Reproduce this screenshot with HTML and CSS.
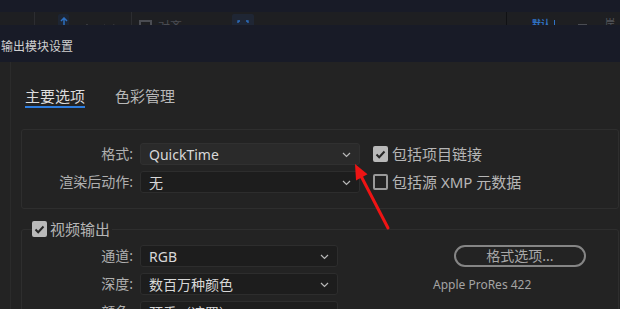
FILE: index.html
```html
<!DOCTYPE html>
<html lang="zh">
<head>
<meta charset="utf-8">
<link rel="stylesheet" href="styles.css">
</head>
<body>
<div class="page">
  <div class="top"></div>
  <div class="toolbar">
    <span class="tb-sep tb-sep1"></span>
    <span class="tb-btn tb-btn1"><svg width="10" height="10" viewBox="0 0 10 10"><path d="M5 1 L5 9 M2 4 L5 1 L8 4" stroke="#2d6fc0" stroke-width="1.5" fill="none"/></svg></span>
    <span class="tb-icon"><svg width="10" height="10" viewBox="0 0 10 10"><path d="M5 1 L5 9 M3 3 L5 1 L7 3 M2 9 H8" stroke="#55575c" stroke-width="1.3" fill="none"/></svg></span>
    <span class="tb-icon tb-icon2"><svg width="14" height="10" viewBox="0 0 14 10"><path d="M1 1 L6 5 L13 2 M10 1 L13 2 L12 5" stroke="#55575c" stroke-width="1.3" fill="none"/></svg></span>
    <span class="tb-sep tb-sep2"></span>
    <span class="tb-box"></span>
    <span class="tb-text">对齐</span>
    <span class="tb-icon tb-icon3"><svg width="6" height="6" viewBox="0 0 6 6"><path d="M0 6 L6 0 L6 6 Z" fill="#55575c"/></svg></span>
    <span class="tb-btn tb-btn2"><svg width="12" height="8" viewBox="0 0 12 8"><path d="M1 3 V1 H3 M9 1 H11 V3 M11 5 V7 H9 M3 7 H1 V5" stroke="#2d6fc0" stroke-width="1.3" fill="none"/></svg></span>
    <span class="tb-sep tb-sep3"></span>
    <span class="tb-blue">默认</span>
    <span class="tb-bar"></span>
    <span class="tb-dash"></span>
    <span class="tb-end">岸</span>
  </div>
  <div class="titlebar">输出模块设置</div>
  <div class="body">
    <div class="main">
      <div class="tabs">
        <div class="tab active">主要选项</div>
        <div class="tab">色彩管理</div>
      </div>
      <div class="panel">
        <div class="label">格式:</div>
        <div class="select select-hover"><span>QuickTime</span><svg class="chev" width="9" height="6" viewBox="0 0 9 6"><path d="M1 1 L4.5 4.5 L8 1" stroke="#b8b8b8" stroke-width="1.2" fill="none"/></svg></div>
        <label class="check"><span class="box checked"><svg width="11" height="9" viewBox="0 0 11 9"><path d="M1.5 4.5 L4.2 7.2 L9.5 1.5" stroke="#262626" stroke-width="2" fill="none"/></svg></span><span class="ctext">包括项目链接</span></label>
        <div class="label">渲染后动作:</div>
        <div class="select"><span>无</span><svg class="chev" width="9" height="6" viewBox="0 0 9 6"><path d="M1 1 L4.5 4.5 L8 1" stroke="#b8b8b8" stroke-width="1.2" fill="none"/></svg></div>
        <label class="check"><span class="box"></span><span class="ctext">包括源 XMP 元数据</span></label>
      </div>
      <fieldset class="group">
        <legend class="legend"><span class="box checked"><svg width="11" height="9" viewBox="0 0 11 9"><path d="M1.5 4.5 L4.2 7.2 L9.5 1.5" stroke="#262626" stroke-width="2" fill="none"/></svg></span><span class="ctext">视频输出</span></legend>
        <div class="grid">
          <div class="label">通道:</div>
          <div class="select"><span>RGB</span><svg class="chev" width="9" height="6" viewBox="0 0 9 6"><path d="M1 1 L4.5 4.5 L8 1" stroke="#b8b8b8" stroke-width="1.2" fill="none"/></svg></div>
          <div class="side"><button class="pill">格式选项...</button></div>
          <div class="label">深度:</div>
          <div class="select"><span>数百万种颜色</span><svg class="chev" width="9" height="6" viewBox="0 0 9 6"><path d="M1 1 L4.5 4.5 L8 1" stroke="#b8b8b8" stroke-width="1.2" fill="none"/></svg></div>
          <div class="side"><span class="codec">Apple ProRes 422</span></div>
          <div class="label">颜色:</div>
          <div class="select"><span>预乘（遮罩）</span><svg class="chev" width="9" height="6" viewBox="0 0 9 6"><path d="M1 1 L4.5 4.5 L8 1" stroke="#b8b8b8" stroke-width="1.2" fill="none"/></svg></div>
          <div class="side"></div>
        </div>
      </fieldset>
    </div>
  </div>
  <svg class="arrow" width="620" height="309" viewBox="0 0 620 309">
    <line x1="361" y1="176" x2="388" y2="228" stroke="#ee1414" stroke-width="3" stroke-linecap="round"/>
    <path d="M355 164 L367.5 174.3 L356 180.5 Z" fill="#ee1414"/>
  </svg>
</div>
</body>
</html>
```
FILE: styles.css
```css
* { box-sizing: border-box; }
html, body { margin: 0; padding: 0; background: #232323; }
body {
  font-family: "Noto Sans", "Noto Sans CJK SC", sans-serif;
  color: #b4b4b4;
}
.page {
  position: relative;
  width: 620px;
  height: 309px;
  overflow: hidden;
}
.top { height: 12px; background: #181b27; }
.toolbar {
  height: 13px;
  background: #1e1f22;
  display: flex;
  align-items: flex-start;
  overflow: hidden;
  padding-top: 2px;
}
.tb-sep { width: 1px; height: 14px; background: #2c2d31; margin-top: -2px; }
.tb-sep1 { margin-left: 34px; }
.tb-btn {
  display: flex; justify-content: center; padding-top: 3px;
  height: 14px; background: #1d2533; border-radius: 2px;
}
.tb-btn1 { width: 11px; margin-left: 23px; }
.tb-icon { padding-top: 3px; margin-left: 13px; }
.tb-icon2 { margin-left: 11px; }
.tb-sep2 { margin-left: 14px; }
.tb-box { width: 13px; height: 14px; border: 2px solid #4a4c52; margin-left: 7px; margin-top: 6px; }
.tb-text { font-size: 12px; line-height: 14px; color: #4a4c52; margin-left: 6px; margin-top: 6px; }
.tb-icon3 { margin-left: 36px; padding-top: 5px; }
.tb-btn2 { width: 22px; margin-left: 8px; padding-top: 6px; background: #1f2634; }
.tb-sep3 { margin-left: 252px; background: #101114; }
.tb-blue { font-size: 9px; color: #2f73c8; font-weight: bold; margin-left: 25px; margin-top: 5px; line-height: 10px; }
.tb-bar { width: 1px; height: 8px; background: #2f73c8; margin-left: 4px; margin-top: 6px; }
.tb-dash { width: 9px; height: 1px; background: #4a4c52; margin-left: 23px; margin-top: 10px; }
.tb-end { font-size: 10px; color: #55575c; margin-left: 18px; margin-top: 4px; line-height: 10px; }

.titlebar {
  height: 37px;
  background: #181b27;
  color: #d0d0d0;
  font-size: 12px;
  line-height: 14px;
  padding-top: 15px;
  padding-left: 1px;
}
.body { height: 247px; padding-left: 10px; background: #232323; }
.main {
  height: 100%;
  border-left: 1px solid #2b2b2b;
  padding-left: 10px;
}
.tabs {
  display: flex;
  gap: 30px;
  padding-top: 24px;
  margin-left: 4px;
}
.tab {
  font-size: 15px;
  line-height: 20px;
  height: 22px;
  color: #b8b8b8;
}
.tab.active {
  color: #dcdcdc;
  border-bottom: 2px solid #2d7ddf;
}
.panel {
  margin-top: 21px;
  width: 598px;
  height: 80px;
  border: 1px solid #2e2e2e;
  border-radius: 3px;
  padding: 13px 0 0 0;
  display: grid;
  grid-template-columns: 111px 220px auto;
  column-gap: 7px;
  row-gap: 6px;
  grid-auto-rows: 22px;
  align-items: center;
}
.label {
  text-align: right;
  font-size: 14px;
  color: #b0b0b0;
  line-height: 22px;
}
.select {
  height: 22px;
  border: 1px solid #2d2d2d;
  background: #1d1d1d;
  border-radius: 3px;
  display: flex;
  align-items: center;
  justify-content: space-between;
  padding: 0 8px 0 8px;
  font-size: 14px;
  color: #d8d8d8;
}
.select-hover { background: #2a2a2a; border-color: #303030; }
.chev { margin-top: 1px; }
.check {
  display: flex;
  align-items: center;
  gap: 4px;
  margin-left: 6px;
}
.box {
  width: 15px;
  height: 16px;
  border: 2px solid #9a9a9a;
  border-radius: 2px;
  display: flex;
  align-items: center;
  justify-content: center;
  flex: none;
}
.box.checked { background: #b9b9b9; border-color: #b9b9b9; }
.ctext { font-size: 15px; color: #b6b6b6; line-height: 22px; }
.group {
  margin: 12px 0 0 0;
  width: 598px;
  height: 100px;
  border: 1px solid #2e2e2e;
  border-radius: 3px;
  padding: 0;
  min-width: 0;
}
.legend {
  display: flex;
  align-items: center;
  gap: 3px;
  margin-left: 10px;
  padding: 0 2px 0 0;
  height: 16px;
}
.legend .ctext { line-height: 16px; }
.grid {
  margin-top: 8px;
  display: grid;
  grid-template-columns: 111px 198px auto;
  column-gap: 7px;
  row-gap: 6px;
  grid-auto-rows: 22px;
  align-items: center;
}
.side { padding-left: 88px; display: flex; align-items: center; }
.pill {
  margin-left: 21px;
  width: 132px;
  height: 22px;
  border: 2px solid #858585;
  border-radius: 11px;
  background: transparent;
  color: #a8a8a8;
  font-family: "Noto Sans", "Noto Sans CJK SC", sans-serif;
  font-size: 14px;
  line-height: 16px;
  padding: 0;
}
.codec { font-size: 12px; color: #a4a4a4; }
.arrow { position: absolute; left: 0; top: 0; pointer-events: none; }
```
